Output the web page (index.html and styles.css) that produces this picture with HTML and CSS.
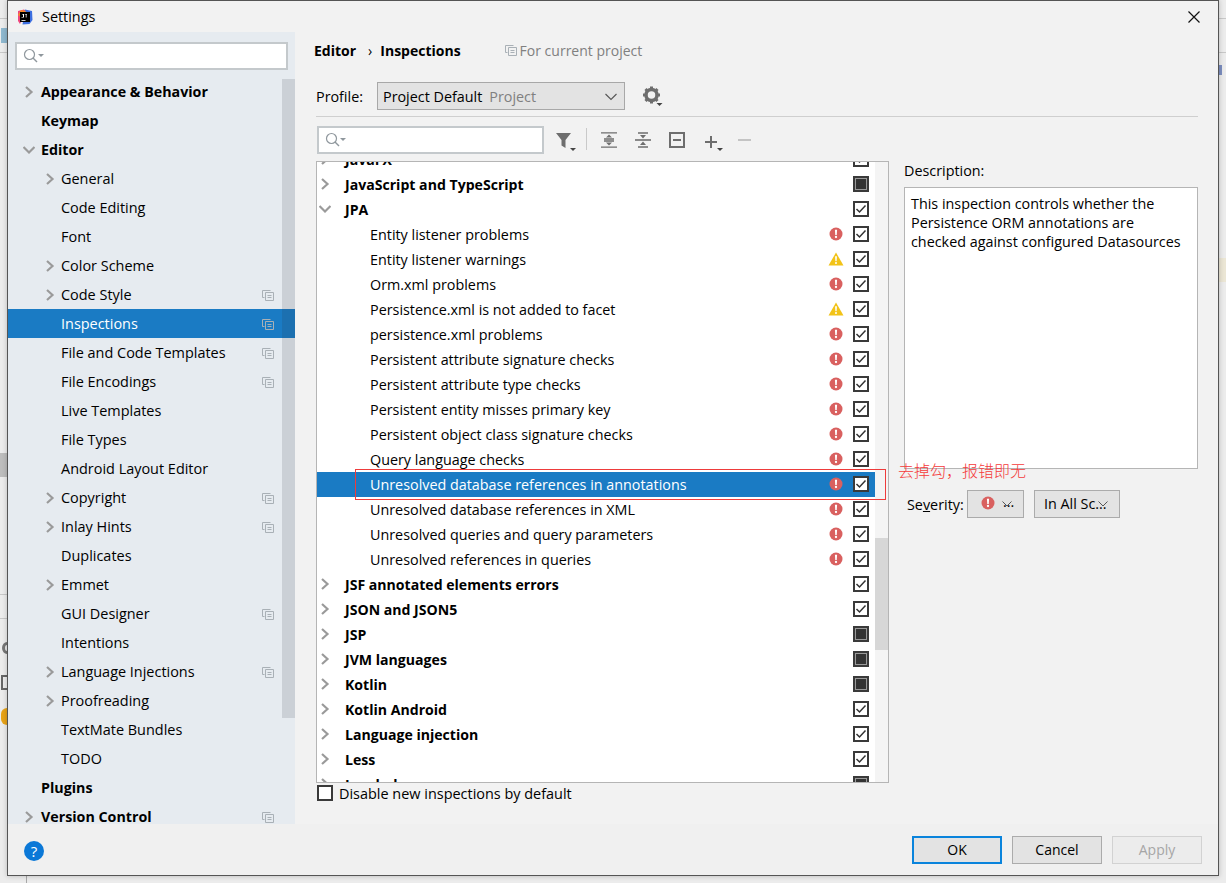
FILE: index.html
```html
<!DOCTYPE html>
<html lang="en">
<head>
<meta charset="utf-8">
<title>Settings</title>
<link rel="stylesheet" href="styles.css">
</head>
<body>
<svg class="defs" width="0" height="0" aria-hidden="true">
  <symbol id="right" viewBox="0 0 12 16"><path d="M3 3l5.5 5L3 13" fill="none" stroke="#9a9a9a" stroke-width="2.2"/></symbol>
  <symbol id="down" viewBox="0 0 12 16"><path d="M.5 5l5.5 5.5L11.500 5" fill="none" stroke="#9a9a9a" stroke-width="2.2"/></symbol>
  <symbol id="copy" viewBox="0 0 12 12"><path d="M8.500 1.500H.5v7h2" fill="none" stroke="#a9b0b6"/><path d="M3.500 3.500h8v8h-8z" fill="none" stroke="#a9b0b6"/><path d="M5.500 6.500h4M5.500 8.500h4" stroke="#a9b0b6"/></symbol>
  <symbol id="err" viewBox="0 0 14 14"><circle cx="7" cy="7" r="6.500" fill="#d9605f"/><path d="M5.900 2.800h2.200l-.35 5.200H6.250z" fill="#fff"/><circle cx="7" cy="10" r="1.150" fill="#fff"/></symbol>
  <symbol id="warn" viewBox="0 0 16 14"><path d="M8 .5l7.500 13H.5z" fill="#f2c318"/><path d="M7.100 4.200h1.800l-.3 5H7.400z" fill="#fff"/><circle cx="8" cy="11" r="1" fill="#fff"/></symbol>
  <symbol id="tick" viewBox="0 0 16 16"><path d="M3.500 8l3 3 6-6.500" fill="none" stroke="#333" stroke-width="1.500"/></symbol>
  <symbol id="glass" viewBox="0 0 22 16"><circle cx="6.500" cy="6.500" r="5" fill="none" stroke="#8f979d" stroke-width="1.200"/><path d="M10 10l4 4" stroke="#8f979d" stroke-width="1.400"/><path d="M15 6h6l-3 3z" fill="#8f979d"/></symbol>
</svg>

<div class="behind">
  <span class="frag frag-a"></span><span class="frag frag-b"></span><span class="frag frag-c"></span><span class="frag frag-d"></span>
  <span class="frag frag-e"></span><span class="frag frag-f"></span><span class="frag frag-g"></span><span class="frag frag-h"></span>
  <span class="frag frag-i"></span><span class="frag frag-j"></span><span class="frag frag-k"></span><span class="frag frag-l"></span>
  <span class="frag frag-m"></span><span class="frag frag-n"></span>
</div>

<div class="dialog">
  <header class="titlebar">
    <svg class="app-logo" viewBox="0 0 16 16" width="16" height="16"><path d="M1 2l6-1.500L9 2l-6 13-2-3z" fill="#f0467c"/><path d="M8 .5l7 1.500.5 9-3 4-7 .5z" fill="#3d6fe0"/><path d="M1 6l3-5 5 1L5 9z" fill="#f58a2a"/><rect x="3" y="3" width="10" height="10" fill="#000"/><path d="M4.500 11h4v.8h-4z" fill="#fff"/><path d="M5 5h2v3.500H4.500V8H6V5.500H5zM7.800 5H10v.6h-.5v2.900H8.800V5.600h-1z" fill="#fff"/></svg>
    <span class="title-text">Settings</span>
    <svg class="close" viewBox="0 0 14 14" width="14" height="14"><path d="M1.500 1.500l11 11M12.500 1.500l-11 11" stroke="#111" stroke-width="1.200"/></svg>
  </header>

  <div class="main">
    <nav class="sidebar">
      <div class="search side-search"><svg class="glass" width="22" height="16"><use href="#glass"/></svg></div>
      <div class="nav-tree">
        <div class="nav-row root"><svg class="chev" width="12" height="16"><use href="#right"/></svg><span class="b">Appearance &amp; Behavior</span></div>
        <div class="nav-row root"><i class="chev"></i><span class="b">Keymap</span></div>
        <div class="nav-row root"><svg class="chev" width="12" height="16"><use href="#down"/></svg><span class="b">Editor</span></div>
        <div class="nav-row sub"><svg class="chev" width="12" height="16"><use href="#right"/></svg><span>General</span></div>
        <div class="nav-row sub"><i class="chev"></i><span>Code Editing</span></div>
        <div class="nav-row sub"><i class="chev"></i><span>Font</span></div>
        <div class="nav-row sub"><svg class="chev" width="12" height="16"><use href="#right"/></svg><span>Color Scheme</span></div>
        <div class="nav-row sub"><svg class="chev" width="12" height="16"><use href="#right"/></svg><span>Code Style</span><svg class="scoped" width="12" height="12"><use href="#copy"/></svg></div>
        <div class="nav-row sub selected"><i class="chev"></i><span>Inspections</span><svg class="scoped" width="12" height="12"><use href="#copy"/></svg></div>
        <div class="nav-row sub"><i class="chev"></i><span>File and Code Templates</span><svg class="scoped" width="12" height="12"><use href="#copy"/></svg></div>
        <div class="nav-row sub"><i class="chev"></i><span>File Encodings</span><svg class="scoped" width="12" height="12"><use href="#copy"/></svg></div>
        <div class="nav-row sub"><i class="chev"></i><span>Live Templates</span></div>
        <div class="nav-row sub"><i class="chev"></i><span>File Types</span></div>
        <div class="nav-row sub"><i class="chev"></i><span>Android Layout Editor</span></div>
        <div class="nav-row sub"><svg class="chev" width="12" height="16"><use href="#right"/></svg><span>Copyright</span><svg class="scoped" width="12" height="12"><use href="#copy"/></svg></div>
        <div class="nav-row sub"><svg class="chev" width="12" height="16"><use href="#right"/></svg><span>Inlay Hints</span><svg class="scoped" width="12" height="12"><use href="#copy"/></svg></div>
        <div class="nav-row sub"><i class="chev"></i><span>Duplicates</span></div>
        <div class="nav-row sub"><svg class="chev" width="12" height="16"><use href="#right"/></svg><span>Emmet</span></div>
        <div class="nav-row sub"><i class="chev"></i><span>GUI Designer</span><svg class="scoped" width="12" height="12"><use href="#copy"/></svg></div>
        <div class="nav-row sub"><i class="chev"></i><span>Intentions</span></div>
        <div class="nav-row sub"><svg class="chev" width="12" height="16"><use href="#right"/></svg><span>Language Injections</span><svg class="scoped" width="12" height="12"><use href="#copy"/></svg></div>
        <div class="nav-row sub"><svg class="chev" width="12" height="16"><use href="#right"/></svg><span>Proofreading</span></div>
        <div class="nav-row sub"><i class="chev"></i><span>TextMate Bundles</span></div>
        <div class="nav-row sub"><i class="chev"></i><span>TODO</span></div>
        <div class="nav-row root"><i class="chev"></i><span class="b">Plugins</span></div>
        <div class="nav-row root"><svg class="chev" width="12" height="16"><use href="#right"/></svg><span class="b">Version Control</span><svg class="scoped" width="12" height="12"><use href="#copy"/></svg></div>
      </div>
      <div class="side-scroll"></div>
    </nav>

    <section class="content">
      <div class="crumbs">
        <span class="b">Editor</span><span class="crumb-sep">›</span><span class="b">Inspections</span>
        <svg class="crumb-icon" width="12" height="12"><use href="#copy"/></svg><span class="muted">For current project</span>
      </div>
      <div class="profile">
        <span class="profile-label">Profile:</span>
        <div class="combo"><span>Project Default</span><span class="combo-sub">Project</span>
          <svg class="combo-arrow" viewBox="0 0 12 8" width="12" height="8"><path d="M.5 1l5.500 5.500L11.500 1" fill="none" stroke="#555" stroke-width="1.100"/></svg></div>
        <svg class="gear" viewBox="0 0 22 22" width="22" height="22"><circle cx="9.500" cy="10" r="5.500" fill="none" stroke="#6e6e6e" stroke-width="3.500"/><path d="M9.500 1.500v3M9.500 15.500v3M1 10h3M15 10h3M3.500 4l2 2M13.500 14l2 2M15.500 4l-2 2M5.500 14l-2 2" stroke="#6e6e6e" stroke-width="3"/><path d="M14.500 18h6l-3 3z" fill="#444"/></svg>
      </div>
      <div class="rule"></div>
      <div class="toolbar">
        <div class="search tree-search"><svg class="glass" width="22" height="16"><use href="#glass"/></svg></div>
        <div class="tools">
          <svg class="tool tool-filter" viewBox="0 0 22 22" width="22" height="22"><path d="M1 3h15l-5.500 7v8l-4-2.500V10z" fill="#6e6e6e"/><path d="M15 18h6l-3 3z" fill="#444"/></svg>
          <i class="tool-sep"></i>
          <svg class="tool tool-a" viewBox="0 0 16 16" width="16" height="16"><path d="M0 .8h16M0 15.200h16M3 7h10M3 9h10" stroke="#6e6e6e" stroke-width="1.300"/><path d="M8 2.500l3 3H5zM8 13.500l3-3H5z" fill="#6e6e6e"/></svg>
          <svg class="tool tool-b" viewBox="0 0 16 16" width="16" height="16"><path d="M0 8h16" stroke="#6e6e6e" stroke-width="1.600"/><path d="M3 1h10M3 15h10" stroke="#6e6e6e" stroke-width="1.500"/><path d="M8 6.500L5 3h6zM8 9.500L5 13h6z" fill="#6e6e6e"/></svg>
          <svg class="tool tool-c" viewBox="0 0 16 16" width="16" height="16"><rect x="1" y="1" width="14" height="14" fill="none" stroke="#6e6e6e" stroke-width="2"/><path d="M4 8h8" stroke="#6e6e6e" stroke-width="2"/></svg>
          <svg class="tool tool-d" viewBox="0 0 22 22" width="22" height="22"><path d="M7 2v12M1 8h12" stroke="#6e6e6e" stroke-width="2"/><path d="M13 14h6l-3 3z" fill="#444"/></svg>
          <svg class="tool tool-e" viewBox="0 0 14 14" width="14" height="14"><path d="M0 7h13" stroke="#c4c4c4" stroke-width="2"/></svg>
        </div>
      </div>

      <div class="columns">
        <div class="left-col">
          <div class="list">
            <div class="rows">
              <div class="row group"><svg class="chev" width="12" height="16"><use href="#right"/></svg><span class="name">JavaFX</span><i class="check on"><svg width="16" height="16"><use href="#tick"/></svg></i></div>
              <div class="row group"><svg class="chev" width="12" height="16"><use href="#right"/></svg><span class="name">JavaScript and TypeScript</span><i class="check mixed"></i></div>
              <div class="row group"><svg class="chev" width="12" height="16"><use href="#down"/></svg><span class="name">JPA</span><i class="check on"><svg width="16" height="16"><use href="#tick"/></svg></i></div>
              <div class="row item"><span class="name">Entity listener problems</span><svg class="sev" width="14" height="14"><use href="#err"/></svg><i class="check on"><svg width="16" height="16"><use href="#tick"/></svg></i></div>
              <div class="row item"><span class="name">Entity listener warnings</span><svg class="sev" width="16" height="14"><use href="#warn"/></svg><i class="check on"><svg width="16" height="16"><use href="#tick"/></svg></i></div>
              <div class="row item"><span class="name">Orm.xml problems</span><svg class="sev" width="14" height="14"><use href="#err"/></svg><i class="check on"><svg width="16" height="16"><use href="#tick"/></svg></i></div>
              <div class="row item"><span class="name">Persistence.xml is not added to facet</span><svg class="sev" width="16" height="14"><use href="#warn"/></svg><i class="check on"><svg width="16" height="16"><use href="#tick"/></svg></i></div>
              <div class="row item"><span class="name">persistence.xml problems</span><svg class="sev" width="14" height="14"><use href="#err"/></svg><i class="check on"><svg width="16" height="16"><use href="#tick"/></svg></i></div>
              <div class="row item"><span class="name">Persistent attribute signature checks</span><svg class="sev" width="14" height="14"><use href="#err"/></svg><i class="check on"><svg width="16" height="16"><use href="#tick"/></svg></i></div>
              <div class="row item"><span class="name">Persistent attribute type checks</span><svg class="sev" width="14" height="14"><use href="#err"/></svg><i class="check on"><svg width="16" height="16"><use href="#tick"/></svg></i></div>
              <div class="row item"><span class="name">Persistent entity misses primary key</span><svg class="sev" width="14" height="14"><use href="#err"/></svg><i class="check on"><svg width="16" height="16"><use href="#tick"/></svg></i></div>
              <div class="row item"><span class="name">Persistent object class signature checks</span><svg class="sev" width="14" height="14"><use href="#err"/></svg><i class="check on"><svg width="16" height="16"><use href="#tick"/></svg></i></div>
              <div class="row item"><span class="name">Query language checks</span><svg class="sev" width="14" height="14"><use href="#err"/></svg><i class="check on"><svg width="16" height="16"><use href="#tick"/></svg></i></div>
              <div class="row item selected"><span class="name">Unresolved database references in annotations</span><svg class="sev" width="14" height="14"><use href="#err"/></svg><i class="check on"><svg width="16" height="16"><use href="#tick"/></svg></i></div>
              <div class="row item"><span class="name">Unresolved database references in XML</span><svg class="sev" width="14" height="14"><use href="#err"/></svg><i class="check on"><svg width="16" height="16"><use href="#tick"/></svg></i></div>
              <div class="row item"><span class="name">Unresolved queries and query parameters</span><svg class="sev" width="14" height="14"><use href="#err"/></svg><i class="check on"><svg width="16" height="16"><use href="#tick"/></svg></i></div>
              <div class="row item"><span class="name">Unresolved references in queries</span><svg class="sev" width="14" height="14"><use href="#err"/></svg><i class="check on"><svg width="16" height="16"><use href="#tick"/></svg></i></div>
              <div class="row group"><svg class="chev" width="12" height="16"><use href="#right"/></svg><span class="name">JSF annotated elements errors</span><i class="check on"><svg width="16" height="16"><use href="#tick"/></svg></i></div>
              <div class="row group"><svg class="chev" width="12" height="16"><use href="#right"/></svg><span class="name">JSON and JSON5</span><i class="check on"><svg width="16" height="16"><use href="#tick"/></svg></i></div>
              <div class="row group"><svg class="chev" width="12" height="16"><use href="#right"/></svg><span class="name">JSP</span><i class="check mixed"></i></div>
              <div class="row group"><svg class="chev" width="12" height="16"><use href="#right"/></svg><span class="name">JVM languages</span><i class="check mixed"></i></div>
              <div class="row group"><svg class="chev" width="12" height="16"><use href="#right"/></svg><span class="name">Kotlin</span><i class="check mixed"></i></div>
              <div class="row group"><svg class="chev" width="12" height="16"><use href="#right"/></svg><span class="name">Kotlin Android</span><i class="check on"><svg width="16" height="16"><use href="#tick"/></svg></i></div>
              <div class="row group"><svg class="chev" width="12" height="16"><use href="#right"/></svg><span class="name">Language injection</span><i class="check on"><svg width="16" height="16"><use href="#tick"/></svg></i></div>
              <div class="row group"><svg class="chev" width="12" height="16"><use href="#right"/></svg><span class="name">Less</span><i class="check on"><svg width="16" height="16"><use href="#tick"/></svg></i></div>
              <div class="row group"><svg class="chev" width="12" height="16"><use href="#right"/></svg><span class="name">Lombok</span><i class="check mixed"></i></div>
            </div>
            <div class="list-track"></div>
            <div class="list-thumb"></div>
          </div>
          <label class="disable"><i class="check"></i><span>Disable new inspections by default</span></label>
        </div>

        <aside class="right-col">
          <div class="desc-label">Description:</div>
          <div class="desc-box">This inspection controls whether the Persistence ORM annotations are checked against configured Datasources</div>
          <div class="severity">
            <span class="sev-label">Se<u>v</u>erity:</span>
            <div class="sev-btn sev-one"><svg width="14" height="14"><use href="#err"/></svg><span class="dots">...</span><svg class="mini" viewBox="0 0 10 6" width="10" height="6"><path d="M.5.5L5 5 9.500.5" fill="none" stroke="#555"/></svg></div>
            <div class="sev-btn sev-two"><span>In All Sc...</span><svg class="mini" viewBox="0 0 10 6" width="10" height="6"><path d="M.5.5L5 5 9.500.5" fill="none" stroke="#555"/></svg></div>
          </div>
        </aside>
      </div>
    </section>
  </div>

  <footer class="footer">
    <div class="help">?</div>
    <div class="buttons">
      <div class="btn primary">OK</div>
      <div class="btn">Cancel</div>
      <div class="btn disabled">Apply</div>
    </div>
  </footer>

  <div class="mark-rect"></div>
  <div class="mark-text">去掉勾，报错即无</div>
</div>
</body>
</html>
```
FILE: styles.css
```css
* { box-sizing: border-box; }
html, body { margin: 0; height: 100%; overflow: hidden; }
body {
  position: relative;
  width: 1226px;
  height: 883px;
  background: #ececec;
  font-family: "Open Sans", "Noto Sans", sans-serif;
  font-size: 14.35px;
  color: #000;
}
.defs { position: absolute; }
.b { font-weight: 700; }
i { display: block; font-style: normal; }

/* what shows behind the dialog */
.frag { position: absolute; display: block; }
.frag-a { left: 0; top: 18px; width: 7px; height: 1px; background: #c8c8c8; }
.frag-b { left: 1px; top: 28px; width: 6px; height: 15px; background: #8fb8cf; }
.frag-c { left: 0; top: 52px; width: 7px; height: 1px; background: #c8c8c8; }
.frag-d { left: 0; top: 453px; width: 7px; height: 24px; background: #bdbdbd; }
.frag-e { left: 0; top: 594px; width: 7px; height: 1px; background: #c8c8c8; }
.frag-f { left: 0; top: 618px; width: 7px; height: 1px; background: #c8c8c8; }
.frag-g { left: 1px; top: 708px; width: 6px; height: 17px; background: #e8a317; border-radius: 6px 0 0 6px; }
.frag-h { left: 1219px; top: 258px; width: 7px; height: 24px; background: #ebe6d5; }
.frag-i { left: 1219px; top: 18px; width: 7px; height: 1px; background: #c8c8c8; }
.frag-j { left: 1219px; top: 52px; width: 7px; height: 1px; background: #c8c8c8; }
.frag-k { left: 2px; top: 642px; width: 10px; height: 12px; border: 3px solid #777; border-radius: 50%; }
.frag-l { left: 1px; top: 675px; width: 10px; height: 15px; border: 2px solid #666; }
.frag-m { left: 26px; top: 876px; width: 1px; height: 7px; background: #a8a8a8; }
.frag-n { left: 1219px; top: 65px; width: 3px; height: 10px; background: #7d8fc0; }

.dialog {
  position: absolute;
  left: 7px;
  top: 0;
  width: 1212px;
  height: 876px;
  border: 1px solid #555;
  background: #f2f2f2;
  box-shadow: 0 0 5px rgba(0, 0, 0, 0.22);
  display: flex;
  flex-direction: column;
}

.titlebar {
  flex: none;
  height: 31px;
  display: flex;
  align-items: center;
  padding-left: 9px;
  padding-right: 17px;
  background: #f2f2f2;
}
.app-logo { flex: none; }
.title-text { margin-left: 9px; font-size: 14.4px; }
.close { margin-left: auto; }

.main { flex: none; height: 792px; display: flex; }

.sidebar {
  position: relative;
  flex: none;
  width: 287px;
  height: 792px;
  overflow: hidden;
  background: #e6ebf0;
  padding-top: 10px;
  font-size: 14.45px;
}
.sidebar .b { font-size: 14.25px; }
.search {
  height: 28px;
  background: #fff;
  border: 2px solid #c4c9cc;
  display: flex;
  align-items: center;
  padding-left: 6px;
}
.side-search { margin: 0 7px; }
.nav-tree { margin-top: 7px; }
.nav-row {
  height: 29px;
  display: flex;
  align-items: center;
  padding-right: 21px;
  white-space: nowrap;
}
.nav-row .chev { flex: none; width: 12px; height: 16px; }
.nav-row.root { padding-left: 15px; }
.nav-row.root .chev { margin-right: 6px; }
.nav-row.sub { padding-left: 36px; }
.nav-row.sub .chev { margin-right: 5px; }
.nav-row.selected { background: #1a7bc4; color: #fff; }
.scoped { margin-left: auto; flex: none; }
.side-scroll {
  position: absolute;
  left: 274px;
  top: 47px;
  width: 13px;
  height: 639px;
  background: rgba(40, 50, 60, 0.14);
}

.content { flex: 1; min-width: 0; padding: 7px 20px 0 21px; }
.crumbs { height: 24px; display: flex; align-items: center; white-space: nowrap; margin-left: -2px; padding-bottom: 2px; font-size: 14px; }
.crumb-sep { margin: 0 8px 0 12px; }
.crumb-icon { margin-left: 44px; margin-right: 3px; }
.muted { color: #808080; }
.profile { margin-top: 19px; height: 28px; display: flex; align-items: center; padding-left: 0; }
.profile-label { width: 61px; }
.combo {
  position: relative;
  width: 248px;
  height: 28px;
  background: #e3e3e3;
  border: 1px solid #a8a8a8;
  display: flex;
  align-items: center;
  padding-left: 5px;
  white-space: nowrap;
}
.combo-sub { margin-left: 7px; color: #808080; }
.combo-arrow { position: absolute; right: 7px; top: 10px; }
.gear { margin-left: 17px; }
.rule { margin-top: 6px; height: 1px; background: #cfcfcf; width: 882px; }
.toolbar { margin-top: 9px; height: 28px; display: flex; align-items: center; padding-left: 1px; }
.tree-search { width: 227px; }
.tools { position: relative; height: 28px; flex: 1; }
.tool { position: absolute; }
.tool-filter { left: 11px; top: 4px; }
.tool-sep { position: absolute; left: 42px; top: 2px; width: 1px; height: 22px; background: #c9c9c9; }
.tool-a { left: 57px; top: 6px; }
.tool-b { left: 91px; top: 6px; }
.tool-c { left: 125px; top: 6px; }
.tool-d { left: 160px; top: 8px; }
.tool-e { left: 194px; top: 7px; }

.columns { margin-top: 7px; display: flex; }
.left-col { flex: none; width: 573px; }
.list {
  position: relative;
  height: 622px;
  border: 1px solid #b5b5b5;
  background: #fff;
  overflow: hidden;
}
.rows { margin-top: -15px; padding-right: 13px; }
.row { height: 25px; display: flex; align-items: center; white-space: nowrap; padding-bottom: 1px; }
.row.group { padding-left: 2px; font-weight: 700; font-size: 14.1px; }
.row.group .chev { flex: none; width: 12px; margin-right: 14px; }
.row.item { padding-left: 53px; }
.row .sev { position: absolute; left: 512px; }
.row .sev[width="16"] { left: 511px; }
.row.selected { background: #1a7bc4; color: #fff; }
.row .check { margin-left: auto; margin-right: 6px; }
.check {
  flex: none;
  width: 16px;
  height: 16px;
  border: 2px solid #3a3a3a;
  background: #fff;
}
.check svg { display: block; margin: -2px; }
.check.mixed { position: relative; }
.check.mixed::after {
  content: "";
  position: absolute;
  left: 1px;
  top: 1px;
  width: 10px;
  height: 10px;
  background: #333;
  outline: 1px solid #9a9a9a;
}
.list-track { position: absolute; left: 558px; top: 0; width: 13px; height: 620px; background: #f4f4f4; }
.list-thumb { position: absolute; left: 558px; top: 376px; width: 13px; height: 112px; background: #d7d7d7; }
.disable { margin-top: 0; display: flex; align-items: center; height: 20px; padding-left: 1px; font-size: 14.45px; }
.disable span { margin-left: 6px; }

.right-col { flex: none; width: 294px; margin-left: 15px; }
.desc-label { height: 20px; line-height: 20px; }
.desc-box {
  margin-top: 6px;
  height: 282px;
  background: #fff;
  border: 1px solid #b5b5b5;
  padding: 6px;
  line-height: 19px;
}
.severity { margin-top: 21px; height: 28px; display: flex; align-items: center; padding-left: 3px; }
.sev-label { width: 60px; }
.sev-btn {
  position: relative;
  height: 28px;
  background: #e3e3e3;
  border: 1px solid #ababab;
  display: flex;
  align-items: center;
  white-space: nowrap;
  padding-bottom: 2px;
}
.sev-one { width: 57px; padding-left: 13px; }
.sev-one .dots { position: absolute; left: 35px; top: 1px; }
.sev-two { width: 86px; margin-left: 10px; padding-left: 9px; }
.mini { position: absolute; top: 10px; left: 34px; }
.sev-two .mini { left: 63px; }

.footer { flex: none; height: 51px; background: #f0f0f0; display: flex; align-items: flex-start; padding: 12px 16px 0 16px; font-size: 14px; }
.help {
  width: 20px;
  height: 20px;
  margin-top: 5px;
  border-radius: 50%;
  background: #0b78d7;
  color: #fff;
  text-align: center;
  font-size: 15px;
  line-height: 20px;
}
.buttons { margin-left: auto; display: flex; gap: 10px; }
.btn {
  width: 90px;
  height: 28px;
  background: #e3e3e3;
  border: 1px solid #ababab;
  text-align: center;
  line-height: 26px;
}
.btn.primary { border: 2px solid #0a84dc; line-height: 24px; }
.btn.disabled { background: #ececec; border-color: #d2d2d2; color: #a6a6a6; }

.mark-rect { position: absolute; left: 347px; top: 468px; width: 531px; height: 31px; border: 1px solid #ee3b3b; }
.mark-text {
  position: absolute;
  left: 890px;
  top: 458px;
  font-family: "Noto Sans CJK SC", sans-serif;
  font-size: 16px;
  line-height: 22px;
  font-weight: 300;
  color: #f53b3b;
  white-space: nowrap;
}
```
